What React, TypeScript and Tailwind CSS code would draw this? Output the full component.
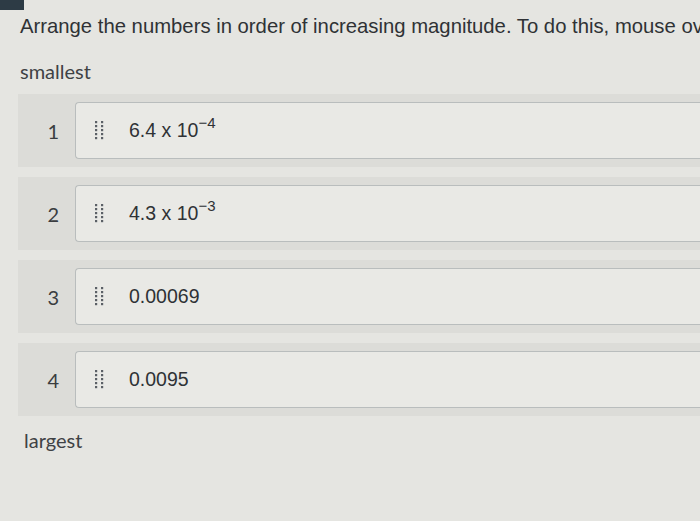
import React from "react";

type Item = { n: number; base: string; exp?: string };

const items: Item[] = [
  { n: 1, base: "6.4 x 10", exp: "−4" },
  { n: 2, base: "4.3 x 10", exp: "−3" },
  { n: 3, base: "0.00069" },
  { n: 4, base: "0.0095" },
];

function Handle() {
  return (
    <svg width="9" height="19" viewBox="0 0 9 19" className="shrink-0">
      {[0, 1, 2, 3, 4].map((r) =>
        [0, 1].map((c) => (
          <rect key={`${r}-${c}`} x={c * 6} y={r * 4} width="2.2" height="2.2" fill="#5b6066" />
        ))
      )}
    </svg>
  );
}

export default function App() {
  return (
    <div className="relative h-[521px] w-[700px] overflow-hidden bg-[#e5e5e1] font-['Lato',sans-serif]">
      <div className="absolute left-0 top-0 h-[10px] w-[24px] bg-[#2d3b45]" />
      <div className="pl-[20px] pt-[13px]">
        <p className="w-max whitespace-nowrap font-['Liberation_Sans',Arial,sans-serif] text-[20.3px] leading-[26px] text-[#2f3235]">
          Arrange the numbers in order of increasing magnitude. To do this, mouse over
        </p>
        <p className="mt-[20px] text-[20px] leading-[24px] text-[#3f4245]">smallest</p>
      </div>

      <div className="mt-[11px] flex flex-col gap-[10px] pl-[18px]">
        {items.map((it) => (
          <div key={it.n} className="flex h-[73px] items-center bg-[#dcdcd8]">
            <div className="w-[57px] pr-[16px] text-right text-[20px] text-[#3a3d40]">{it.n}</div>
            <div className="flex h-[57px] flex-1 items-center gap-[25px] rounded-l-[4px] border border-r-0 border-[#b9bdbd] bg-[#e9e9e5] pl-[19px]">
              <Handle />
              <span className="font-['Liberation_Sans',Arial,sans-serif] text-[19.5px] text-[#2f3235]">
                {it.base}
                {it.exp && <span className="relative -top-[9px] text-[15px]">{it.exp}</span>}
              </span>
            </div>
          </div>
        ))}
      </div>

      <p className="mt-[12px] pl-[24px] text-[20px] leading-[24px] text-[#3f4245]">largest</p>
    </div>
  );
}
